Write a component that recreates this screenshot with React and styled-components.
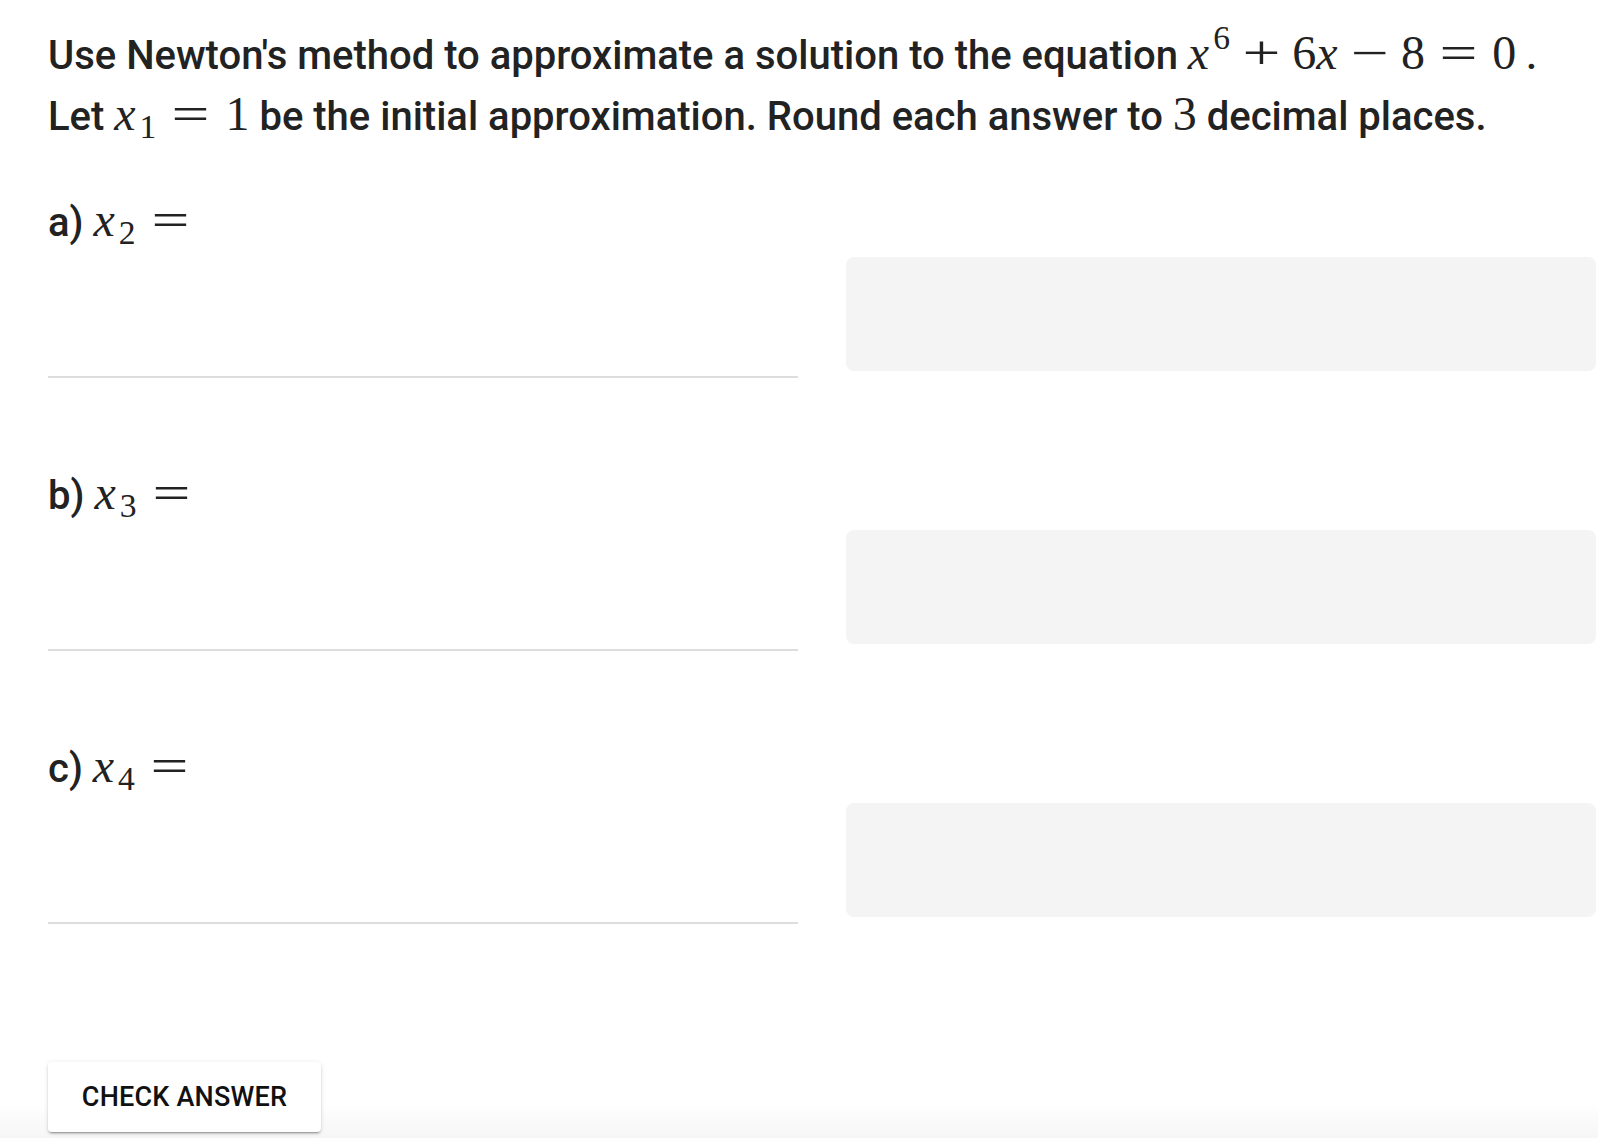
import React from 'react';
import styled, { createGlobalStyle } from 'styled-components';

const GlobalStyle = createGlobalStyle`
  html, body {
    margin: 0;
    padding: 0;
    min-height: 100vh;
  }
  body {
    font-family: Roboto, "Liberation Sans", sans-serif;
    color: #222;
    background: linear-gradient(to bottom, #fff 0, #fff calc(100vh - 34px), #f6f6f6 100vh);
    background-repeat: no-repeat;
  }
`;

const Page = styled.div`
  padding: 25px 2px 0 48px;
`;

const Question = styled.div`
  font-size: 40px;
  font-weight: 500;
  line-height: 61px;
`;

const Line = styled.div`
  white-space: nowrap;
`;

// stand-in for the KaTeX math font
const Math = styled.span`
  font-family: "Liberation Serif", "DejaVu Serif", serif;
  font-weight: 400;
  font-size: 1.2em;
  line-height: 0;
  color: #222;
`;

const V = styled.i`
  font-style: italic;
  margin-right: 0.02em;
`;

const Sub = styled.span`
  font-size: 0.7em;
  line-height: 0;
  vertical-align: -0.25em;
  margin-left: 3px;
`;

const Sup = styled.span`
  font-size: 0.7em;
  line-height: 0;
  vertical-align: 0.6em;
  margin-left: 3px;
`;

// binary/relation operators: wide box, glyph stretched like the CM shapes
const Op = styled.span`
  display: inline-block;
  width: ${p => p.$w || 1.44}em;
  text-align: center;
  line-height: 0;
`;

const OpGlyph = styled.span`
  display: inline-block;
  transform: scaleX(1.4);
`;

const Part = styled.div`
  display: grid;
  grid-template-columns: 750px 750px;
  column-gap: 48px;
  margin-top: ${p => p.$top}px;
`;

const LeftCell = styled.div`
  height: 178px;
  border-bottom: 2px solid #dddddd;
`;

const Label = styled.div`
  font-size: 40px;
  font-weight: 500;
  line-height: 50px;
  white-space: nowrap;
`;

const AnswerBox = styled.div`
  align-self: end;
  margin-bottom: 7px;
  height: 114px;
  background: #f4f4f4;
  border-radius: 8px;
`;

const Button = styled.button`
  display: block;
  margin-top: 138px;
  width: 273px;
  height: 70px;
  border: none;
  border-radius: 4px;
  background: #fff;
  color: #111;
  font-family: Roboto, "Liberation Sans", sans-serif;
  font-size: 27px;
  font-weight: 500;
  letter-spacing: 0.2px;
  cursor: pointer;
  box-shadow: 0 3px 1px -2px rgba(0, 0, 0, 0.2), 0 2px 2px 0 rgba(0, 0, 0, 0.14),
    0 1px 5px 0 rgba(0, 0, 0, 0.12);
`;

const O = ({ children, w }) => (
  <Op $w={w}>
    <OpGlyph>{children}</OpGlyph>
  </Op>
);

const parts = [
  { letter: 'a', index: 2, top: 51 },
  { letter: 'b', index: 3, top: 93 },
  { letter: 'c', index: 4, top: 93 },
];

export default function App() {
  return (
    <>
      <GlobalStyle />
      <Page>
        <Question>
          <Line>
            Use Newton's method to approximate a solution to the equation{' '}
            <Math>
              <V>x</V>
              <Sup>6</Sup>
              <O w={1.3}>+</O>6<V>x</V>
              <O w={1.3}>−</O>8<O w={1.4}>=</O>0
            </Math>{' '}
            .
          </Line>
          <Line>
            Let{' '}
            <Math>
              <V>x</V>
              <Sub>1</Sub>
              <O>=</O>1
            </Math>{' '}
            be the initial approximation. Round each answer to <Math>3</Math> decimal places.
          </Line>
        </Question>

        {parts.map(p => (
          <Part key={p.letter} $top={p.top}>
            <LeftCell>
              <Label>
                {p.letter}){' '}
                <Math>
                  <V>x</V>
                  <Sub>{p.index}</Sub>
                  <O>=</O>
                </Math>
              </Label>
            </LeftCell>
            <AnswerBox />
          </Part>
        ))}

        <Button>CHECK ANSWER</Button>
      </Page>
    </>
  );
}
